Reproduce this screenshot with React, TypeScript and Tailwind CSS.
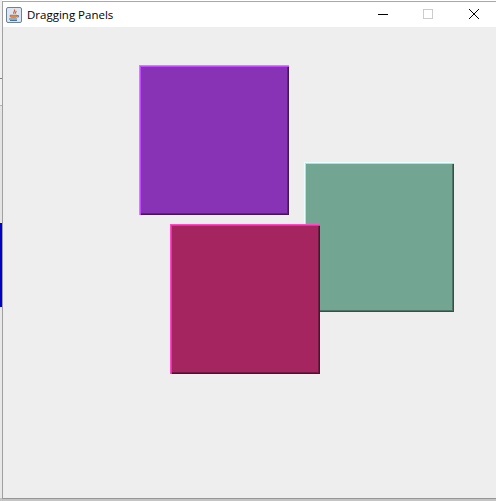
function BevelPanel({ className }: { className: string }) {
  return <div className={className} />;
}

function JavaIcon() {
  return (
    <svg width="16" height="16" viewBox="0 0 16 16" className="block">
      <rect x="0.5" y="0.5" width="15" height="15" rx="1.5" fill="#dbe6f2" stroke="#6d8197" />
      <path d="M8.500 2.500c1.200 1.500-1.800 2.500-.6 4.200M10 4c.6 1-1.200 1.600-.6 2.700" fill="none" stroke="#d9541e" strokeWidth="1.100" />
      <path d="M4 8h7v1.200c0 .8-.8 1.300-1.500 1.300h-4C4.800 10.500 4 10 4 9.200z" fill="#e8863a" stroke="#9a5a2c" strokeWidth="0.400" />
      <path d="M3 12h8M4 13.500h7" stroke="#4b6f96" strokeWidth="1" fill="none" />
      <path d="M11 8.500h1.500v1.500H11" fill="none" stroke="#4b6f96" strokeWidth="0.800" />
    </svg>
  );
}

export default function App() {
  return (
    <div className="w-[496px] h-[501px] bg-white flex overflow-hidden font-['Segoe_UI','Open_Sans','Noto_Sans',sans-serif]">
      <div className="w-[2px] shrink-0 flex flex-col bg-[#f0f0f0]">
        <div className="h-[78px] shrink-0" />
        <div className="h-px shrink-0 bg-[#808080]" />
        <div className="h-[26px] shrink-0" />
        <div className="h-px shrink-0 bg-[#b4b4b4]" />
        <div className="h-[117px] shrink-0 bg-[#e4e4e4]" />
        <div className="h-[84px] shrink-0 bg-[#0000d0]" />
        <div className="flex-1 bg-[#e8e8e8]" />
        <div className="h-[3px] shrink-0 bg-[#c4c4c4]" />
      </div>
      <div className="flex-1 flex flex-col">
        <div className="flex-1 flex flex-col border-l border-[#a0a0a0] mt-px border-t border-t-[#a8a8a8] border-b border-b-[#969696]">
          <div className="h-[25px] shrink-0 bg-white flex items-center pl-[3px]">
            <JavaIcon />
            <span className="ml-[5px] text-[11.5px] leading-none text-black">Dragging Panels</span>
            <div className="ml-auto flex items-center h-full pr-[8px]">
              <svg width="110" height="25" viewBox="0 0 110 25" className="block" fill="none">
                <path d="M0 12.500h10" stroke="#000" />
                <rect x="45.500" y="7.500" width="9" height="9" stroke="#cccccc" />
                <path d="M91 7l10 10M101 7l-10 10" stroke="#000" />
              </svg>
            </div>
          </div>
          <div className="flex-1 relative bg-[#eeeeee]">
            <BevelPanel className="absolute left-[136px] top-[38px] w-[150px] h-[150px] bg-[#8833b5] shadow-[inset_1px_1px_0_#ff68ff,inset_2px_2px_0_#c249ff,inset_-1px_-1px_0_#421958,inset_-2px_-2px_0_#5f237e]" />
            <BevelPanel className="absolute left-[301px] top-[135px] w-[150px] h-[150px] bg-[#72a592] shadow-[inset_1px_1px_0_#e7ffff,inset_2px_2px_0_#a2ebd0,inset_-1px_-1px_0_#375047,inset_-2px_-2px_0_#4f7366]" />
            <BevelPanel className="absolute left-[167px] top-[197px] w-[150px] h-[150px] bg-[#a52560] shadow-[inset_1px_1px_0_#ff49c5,inset_2px_2px_0_#eb338a,inset_-1px_-1px_0_#50112f,inset_-2px_-2px_0_#731943]" />
          </div>
        </div>
        <div className="h-[2px] shrink-0 bg-[#c4c4c4]" />
      </div>
    </div>
  );
}
